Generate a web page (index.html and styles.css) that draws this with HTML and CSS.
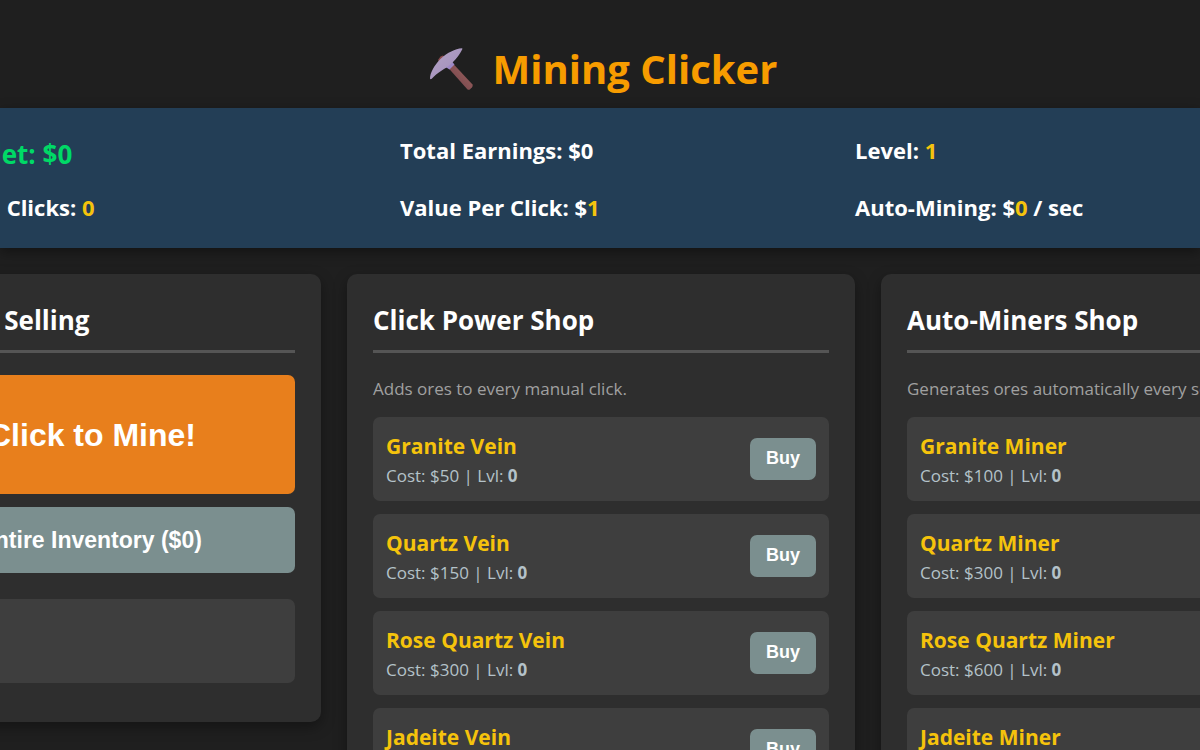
FILE: index.html
```html
<!DOCTYPE html>
<html lang="en">
<head>
	<meta charset="UTF-8">
	<meta name="viewport" content="width=device-width, initial-scale=1.0">
	<title>Mining Clicker</title>
	<link rel="stylesheet" href="styles.css">
</head>
<body>
	<svg class="defs" width="0" height="0" aria-hidden="true">
		<defs>
			<linearGradient id="steel" x1="0" y1="0" x2="1" y2="1">
				<stop offset="0" stop-color="#b3a3c4"/>
				<stop offset="1" stop-color="#a08cbb"/>
			</linearGradient>
			<linearGradient id="wood" x1="0" y1="1" x2="1" y2="0">
				<stop offset="0" stop-color="#6f3f4a"/>
				<stop offset="1" stop-color="#a0665f"/>
			</linearGradient>
		</defs>
		<symbol id="pickaxe" viewBox="4 4 56 52">
			<path d="M19 20L21.500 16.500L24 15.500L28 19L22 24Z" fill="#8a4a4b"/>
			<path d="M28.500 27L33 22.500L53.500 44.500Q54.200 46 53 47.300L50.800 49.400Q49.500 50.300 48.300 49.300Z" fill="url(#wood)"/>
			<path d="M26.500 27L32.500 21L35.500 24.500L30.500 29.500Z" fill="#9d88c6"/>
			<path d="M43 8.200C36 8.800 28.500 12.500 21.700 18.700C15 25.500 11 33 11 38.500Q11.500 40 13 38.600C15.500 35.500 18.500 33.500 22 31C26 28.500 30 26 33.500 22.500C37.500 18.500 41 14 43.300 9.200Q43.600 8.300 43 8.200Z" fill="url(#steel)"/>
		</symbol>
	</svg>

	<header class="title">
		<h1><svg class="title-icon" aria-hidden="true"><use href="#pickaxe"/></svg>Mining Clicker</h1>
	</header>

	<section class="stats">
		<div class="stats-grid">
			<div class="wallet">Wallet: $<span id="wallet">0</span></div>
			<div>Total Earnings: $<span id="earnings">0</span></div>
			<div>Level: <span class="value">1</span></div>
			<div>Total Clicks: <span class="value">0</span></div>
			<div>Value Per Click: $<span class="value">1</span></div>
			<div>Auto-Mining: $<span class="value">0</span> / sec</div>
		</div>
	</section>

	<main class="game">
		<section class="panel">
			<h2><svg class="head-icon" aria-hidden="true"><use href="#pickaxe"/></svg>Mining &amp; Selling</h2>
			<button type="button" class="mine-btn"><svg class="mine-icon" aria-hidden="true"><use href="#pickaxe"/></svg>Click to Mine!</button>
			<button type="button" class="sell-btn">Sell Entire Inventory ($0)</button>
			<div class="inventory"></div>
		</section>

		<section class="panel">
			<h2>Click Power Shop</h2>
			<p class="desc">Adds ores to every manual click.</p>
			<ul class="shop">
				<li class="item">
					<div>
						<h3>Granite Vein</h3>
						<p>Cost: $50 | Lvl: <strong>0</strong></p>
					</div>
					<button type="button" class="buy-btn">Buy</button>
				</li>
				<li class="item">
					<div>
						<h3>Quartz Vein</h3>
						<p>Cost: $150 | Lvl: <strong>0</strong></p>
					</div>
					<button type="button" class="buy-btn">Buy</button>
				</li>
				<li class="item">
					<div>
						<h3>Rose Quartz Vein</h3>
						<p>Cost: $300 | Lvl: <strong>0</strong></p>
					</div>
					<button type="button" class="buy-btn">Buy</button>
				</li>
				<li class="item">
					<div>
						<h3>Jadeite Vein</h3>
						<p>Cost: $600 | Lvl: <strong>0</strong></p>
					</div>
					<button type="button" class="buy-btn">Buy</button>
				</li>
			</ul>
		</section>

		<section class="panel">
			<h2>Auto-Miners Shop</h2>
			<p class="desc">Generates ores automatically every second.</p>
			<ul class="shop">
				<li class="item">
					<div>
						<h3>Granite Miner</h3>
						<p>Cost: $100 | Lvl: <strong>0</strong></p>
					</div>
					<button type="button" class="buy-btn">Buy</button>
				</li>
				<li class="item">
					<div>
						<h3>Quartz Miner</h3>
						<p>Cost: $300 | Lvl: <strong>0</strong></p>
					</div>
					<button type="button" class="buy-btn">Buy</button>
				</li>
				<li class="item">
					<div>
						<h3>Rose Quartz Miner</h3>
						<p>Cost: $600 | Lvl: <strong>0</strong></p>
					</div>
					<button type="button" class="buy-btn">Buy</button>
				</li>
				<li class="item">
					<div>
						<h3>Jadeite Miner</h3>
						<p>Cost: $1200 | Lvl: <strong>0</strong></p>
					</div>
					<button type="button" class="buy-btn">Buy</button>
				</li>
			</ul>
		</section>
	</main>
</body>
</html>
```

FILE: styles.css
```css
*{margin: 0;padding: 0;box-sizing: border-box;}
body{background: #1f1f1f;color: #fff;font-family: "Segoe UI","Open Sans",sans-serif;overflow-x: hidden;}
ul{list-style: none;}
button{border: none;color: #fff;font-family: "Liberation Sans",Arial,sans-serif;font-weight: bold;cursor: pointer;}
.defs{display: block;}

/* title */
.title{padding: 44px 0 12px;}
.title h1{display: flex;justify-content: center;gap: 14px;font-size: 40px;line-height: 50px;color: #f79c00;}
.title-icon{width: 56px;height: 52px;}

/* stats bar */
.stats{background: #233e56;padding: 26px 0 25px;box-shadow: 0 4px 12px rgba(0,0,0,0.4);}
.stats-grid{display: grid;grid-template-columns: repeat(3,1fr);gap: 17px 53px;margin: 0 -57px 0 -55px;font-size: 22px;font-weight: bold;line-height: 32px;}
.wallet{font-size: 26px;line-height: 40px;color: #00d966;}
.value{color: #f5c30c;}

/* the three panels run past both window edges */
.game{display: grid;grid-template-columns: repeat(3,1fr);gap: 26px;align-items: start;margin: 26px -189px 26px -187px;}
.panel{background: #2e2e2e;border-radius: 10px;padding: 26px;box-shadow: 0 5px 14px rgba(0,0,0,0.35);}
.panel h2{display: flex;gap: 7px;font-size: 26px;line-height: 40px;padding-bottom: 10px;border-bottom: 3px solid #555;margin-bottom: 22px;}
.head-icon{width: 36px;height: 40px;}

.mine-btn{display: flex;align-items: center;justify-content: center;gap: 6px;width: 100%;padding: 42px 0 40px;background: #e87f1c;border-radius: 7px;font-size: 32px;line-height: 37px;}
.mine-icon{width: 44px;height: 37px;}
.sell-btn{display: block;width: 100%;margin: 13px 0 26px;padding: 20px 0;background: #7b8f8f;border-radius: 7px;font-size: 23px;line-height: 26px;}
.inventory{min-height: 84px;margin-bottom: 13px;background: #3e3e3e;border-radius: 7px;}

.desc{color: #a0a0a0;font-size: 17px;line-height: 28px;margin-bottom: 14px;}
.item{display: flex;justify-content: space-between;align-items: center;padding: 12px 13px;margin-bottom: 13px;background: #3e3e3e;border-radius: 7px;}
.item h3{color: #f5c30c;font-size: 21px;line-height: 34px;}
.item p{color: #b4c2c9;font-size: 17px;line-height: 26px;}
.buy-btn{padding: 9px 16px 11px;background: #7b8f8f;border-radius: 7px;font-size: 18px;line-height: 22px;}
```
